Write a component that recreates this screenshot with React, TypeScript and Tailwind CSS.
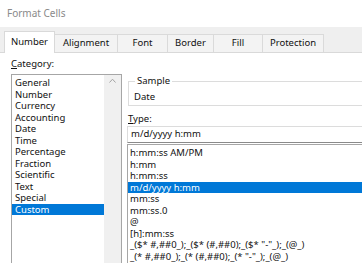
const categories = [
  'General',
  'Number',
  'Currency',
  'Accounting',
  'Date',
  'Time',
  'Percentage',
  'Fraction',
  'Scientific',
  'Text',
  'Special',
  'Custom',
];

const types = [
  'h:mm:ss AM/PM',
  'h:mm',
  'h:mm:ss',
  'm/d/yyyy h:mm',
  'mm:ss',
  'mm:ss.0',
  '@',
  '[h]:mm:ss',
  '_($* #,##0_);_($* (#,##0);_($* "-"_);_(@_)',
  '_(* #,##0_);_(* (#,##0);_(* "-"_);_(@_)',
];

const tabs = [
  { label: 'Number', w: 'w-[51px]' },
  { label: 'Alignment', w: 'w-[63px]' },
  { label: 'Font', w: 'w-[50px]' },
  { label: 'Border', w: 'w-[46px]' },
  { label: 'Fill', w: 'w-[49px]' },
  { label: 'Protection', w: 'w-[61px]' },
];

export default function App() {
  return (
    <div className="h-[263px] w-[362px] overflow-hidden bg-white text-[9.5px] text-[#111] [font-family:'Noto_Sans',sans-serif]">
      <div className="flex h-[27px] items-center pl-[7px] text-[10px] text-[#8a8a8a]">Format Cells</div>

      <div className="flex h-[25px] items-end bg-[#efefef] pl-[4px]">
        {tabs.map((t, i) =>
          i === 0 ? (
            <div
              key={t.label}
              className={`relative z-10 -mb-px flex h-[22px] items-center justify-center border border-b-0 border-[#d9d9d9] bg-white ${t.w}`}
            >
              {t.label}
            </div>
          ) : (
            <div
              key={t.label}
              className={`flex h-[18px] items-center justify-center border border-l-0 border-b-0 border-[#dadada] bg-[#f3f3f3] ${t.w}`}
            >
              {t.label}
            </div>
          )
        )}
      </div>

      <div className="flex border-t border-[#d9d9d9] bg-white">
        <div className="w-[122px] shrink-0 pl-[11px] pt-[5px]">
          <div className="h-[12px] leading-[12px]">
            <span className="underline">C</span>ategory:
          </div>
          <div className="mt-[4px] flex h-[220px] border border-[#a6a6a6]">
            <div className="flex-1 pt-[2px]">
              {categories.map((c) => (
                <div
                  key={c}
                  className={`h-[11.5px] pl-[3px] leading-[11.5px] ${c === 'Custom' ? 'bg-[#0078d7] text-white' : ''}`}
                >
                  {c}
                </div>
              ))}
            </div>
            <div className="flex w-[17px] justify-center bg-[#f0f0f0] pt-[3px]">
              <svg width="7" height="5" viewBox="0 0 7 5">
                <path d="M0.5 4.5 L3.5 1.2 L6.5 4.5" fill="none" stroke="#a3a3a3" strokeWidth="1" />
              </svg>
            </div>
          </div>
        </div>

        <div className="ml-[5px] w-[300px] shrink-0 pt-[22px]">
          <fieldset className="ml-[1px] border border-[#dcdcdc] pb-[2px] pl-[5px]">
            <legend className="ml-[1px] h-[12px] px-[2px] leading-[12px]">Sample</legend>
            <div className="mt-[4px] h-[12px] leading-[12px]">Date</div>
          </fieldset>

          <div className="mt-[7px] h-[12px] pl-[1px] leading-[12px]">
            <span className="underline">T</span>ype:
          </div>
          <div className="mt-[1px] flex h-[17px] items-center border border-[#dcdcdc] border-b-[#8a8a8a] pl-[3px]">
            m/d/yyyy h:mm
          </div>
          <div className="mt-[1px] h-[200px] border border-[#a6a6a6] pt-[2px]">
            {types.map((t) => (
              <div
                key={t}
                className={`h-[11.5px] whitespace-pre pl-[2px] leading-[11.5px] ${t === 'm/d/yyyy h:mm' ? 'bg-[#0078d7] text-white' : ''}`}
              >
                {t}
              </div>
            ))}
          </div>
        </div>
      </div>
    </div>
  );
}
